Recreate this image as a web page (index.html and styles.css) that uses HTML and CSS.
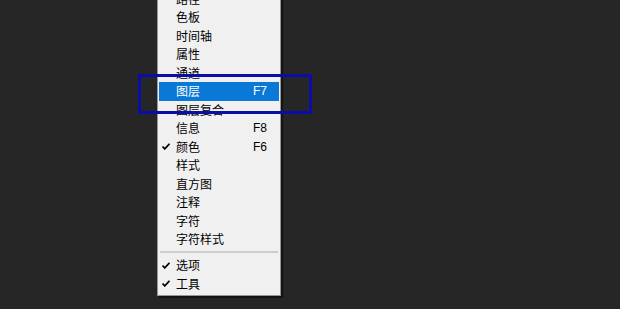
FILE: index.html
```html
<!DOCTYPE html>
<html lang="zh-CN">
<head>
  <meta charset="UTF-8" />
  <title>窗口菜单</title>
  <link rel="stylesheet" href="styles.css">
</head>
<body>
  <div class="stage">
    <!-- 窗口菜单 -->
    <ul class="menu">
      <li class="item"><span class="check"></span><span class="label">路径</span></li>
      <li class="item"><span class="check"></span><span class="label">色板</span></li>
      <li class="item"><span class="check"></span><span class="label">时间轴</span></li>
      <li class="item"><span class="check"></span><span class="label">属性</span></li>
      <li class="item"><span class="check"></span><span class="label">通道</span></li>
      <li class="item active"><span class="check"></span><span class="label">图层</span><span class="key">F7</span></li>
      <li class="item"><span class="check"></span><span class="label">图层复合</span></li>
      <li class="item"><span class="check"></span><span class="label">信息</span><span class="key">F8</span></li>
      <li class="item">
        <span class="check"><svg viewBox="0 0 8 7"><path d="M0.5 3.6 L2.8 5.9 L7.5 0.8" /></svg></span>
        <span class="label">颜色</span><span class="key">F6</span>
      </li>
      <li class="item"><span class="check"></span><span class="label">样式</span></li>
      <li class="item"><span class="check"></span><span class="label">直方图</span></li>
      <li class="item"><span class="check"></span><span class="label">注释</span></li>
      <li class="item"><span class="check"></span><span class="label">字符</span></li>
      <li class="item"><span class="check"></span><span class="label">字符样式</span></li>
      <li class="sep"></li>
      <li class="item">
        <span class="check"><svg viewBox="0 0 8 7"><path d="M0.5 3.6 L2.8 5.9 L7.5 0.8" /></svg></span>
        <span class="label">选项</span>
      </li>
      <li class="item">
        <span class="check"><svg viewBox="0 0 8 7"><path d="M0.5 3.6 L2.8 5.9 L7.5 0.8" /></svg></span>
        <span class="label">工具</span>
      </li>
    </ul>

    <!-- 标注框 -->
    <div class="mark"></div>
  </div>
</body>
</html>
```

FILE: styles.css
```css
*, *::before, *::after {
  box-sizing: border-box;
}

html, body {
  margin: 0;
  height: 100%;
  background: #262626;
}

body {
  font-family: "Noto Sans CJK SC", "Microsoft YaHei", sans-serif;
  font-size: 12px;
  color: #000;
  overflow: hidden;
}

.stage {
  position: relative;
  height: 309px;
  overflow: hidden;
  padding-top: 1px;
}

/* 菜单 */
.menu {
  list-style: none;
  margin: -14.5px 0 0 157px;
  width: 124px;
  padding: 2px 1px;
  background: #f0f0f0;
  border: 1px solid #979797;
  box-shadow: 2px 2px 1px rgba(0, 0, 0, 0.45);
}

.item {
  display: grid;
  grid-template-columns: 17px 77px 1fr;
  align-items: center;
  height: 18.5px;
  line-height: 18.5px;
  white-space: nowrap;
}

.item.active {
  background: #0a78d7;
  color: #fff;
}

.check {
  padding-left: 3px;
  display: flex;
  align-items: center;
}

.check svg {
  width: 8px;
  height: 7px;
  fill: none;
  stroke: #000;
  stroke-width: 1.7;
}

.key {
  font-family: "Liberation Sans", "DejaVu Sans", sans-serif;
  font-size: 12px;
}

.sep {
  height: 7.5px;
  padding-top: 2.5px;
}

.sep::before {
  content: "";
  display: block;
  height: 2px;
  margin: 0 1px;
  background: #cdcdcd;
}

/* 蓝色标注 */
.mark {
  position: absolute;
  left: 138px;
  top: 74px;
  width: 174px;
  height: 40px;
  border: 3px solid #0c0ca6;
}
```
